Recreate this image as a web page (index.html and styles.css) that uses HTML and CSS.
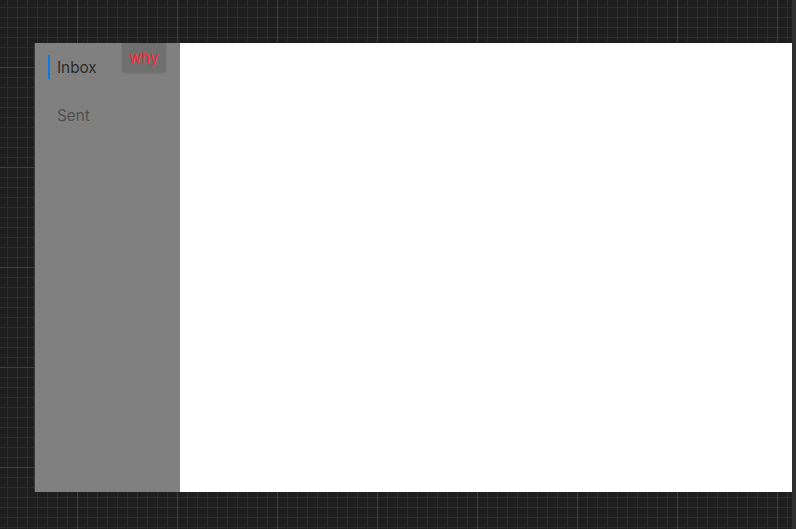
FILE: index.html
```html
<!DOCTYPE html>
<html>
<head>
<meta charset="utf-8">
<link rel="stylesheet" href="styles.css">
</head>
<body>
<div class="canvas">
  <div class="stage">
    <div class="window">
      <nav class="sidebar">
        <div class="item active"><span class="bar"></span><span class="label">Inbox</span></div>
        <div class="item"><span class="bar"></span><span class="label">Sent</span></div>
        <div class="badge">why</div>
      </nav>
      <main class="content"></main>
    </div>
  </div>
  <div class="scroll"></div>
</div>
</body>
</html>
```
FILE: styles.css
```css
html, body {
  margin: 0;
  padding: 0;
  height: 100%;
}
body {
  font-family: Inter, "Noto Sans", sans-serif;
  background-color: #1e1e1e;
  background-image:
    linear-gradient(to right, #1a4090 1px, transparent 1px),
    linear-gradient(to bottom, #1a4090 1px, transparent 1px),
    linear-gradient(to right, #1e2c50 1px, transparent 1px),
    linear-gradient(to bottom, #1e2c50 1px, transparent 1px);
  background-size: 100px 100px, 100px 100px, 10px 10px, 10px 10px;
  background-position: 77px 0, 0 67px, 7px 0, 0 7px;
  overflow: hidden;
}
.canvas {
  display: flex;
  height: 529px;
}
.stage {
  flex: 1;
  padding: 43px 0 0 35px;
}
.scroll {
  width: 4px;
  background: #2e2e2e;
}
.window {
  display: flex;
  height: 449px;
  box-shadow: -1px 0 0 #3a3a3a;
}
.sidebar {
  position: relative;
  width: 145px;
  background: #808080;
  padding: 12px 0 0 13px;
  box-sizing: border-box;
  display: flex;
  flex-direction: column;
  gap: 24px;
}
.item {
  display: flex;
  align-items: center;
  height: 24px;
  gap: 7px;
}
.bar {
  width: 2px;
  height: 24px;
  background: transparent;
}
.item.active .bar {
  background: #0a7be0;
}
.label {
  font-size: 15.3px;
  color: #505050;
}
.item.active .label {
  color: #2c2c2c;
}
.badge {
  position: absolute;
  top: 0;
  left: 87px;
  width: 44px;
  height: 29px;
  background: #6f6f6f;
  border-radius: 0 0 3px 3px;
  box-shadow: 0 1px 2px rgba(0,0,0,0.15);
  color: #ff2436;
  font-size: 15px;
  display: flex;
  align-items: center;
  justify-content: center;
  line-height: 1;
}
.content {
  flex: 1;
  background: #ffffff;
}
```
